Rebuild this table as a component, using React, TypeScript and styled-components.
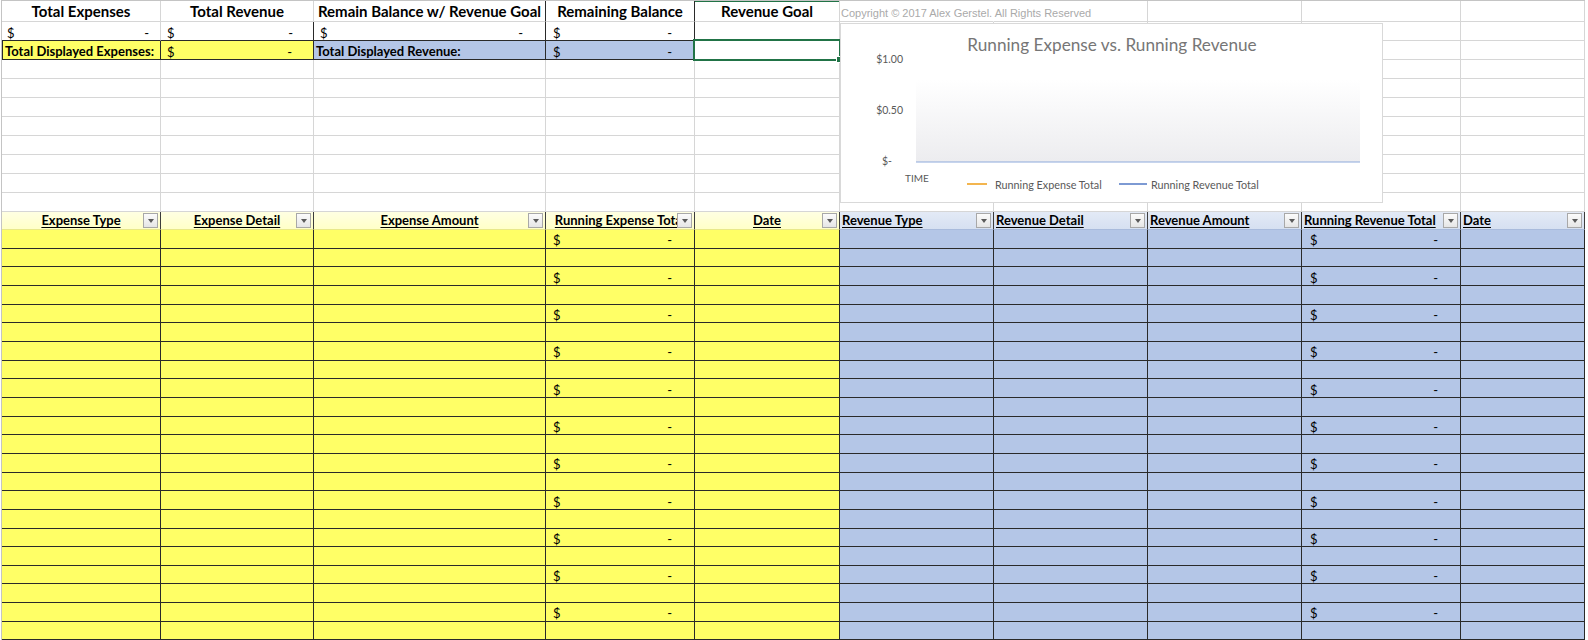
import React from 'react';
import styled, { createGlobalStyle } from 'styled-components';

const YELLOW = '#FFFF66';
const BLUE = '#B4C6E7';
const GRID = '#d6d6d6';
const DARK = '#2a2a2a';
const GREEN = '#217346';

const COLS = [159, 153, 232, 149, 145, 154, 154, 154, 159, 124];

const GlobalStyle = createGlobalStyle`
  html, body { margin: 0; padding: 0; background: #fff; }
  body { font-family: Lato, "Liberation Sans", sans-serif; color: #000; }
`;

const Page = styled.div`
  position: relative;
  width: 1588px;
  height: 640px;
  overflow: hidden;
  box-sizing: border-box;
  padding-left: 1px;
  background: #fff;
`;

const Sheet = styled.div`
  display: grid;
  grid-template-columns: ${COLS.map((c) => `${c}px`).join(' ')};
  grid-template-rows: 21px repeat(10, 19px) 18px repeat(22, 18.67px);
  width: max-content;
  border-left: 1px solid #c4c4c4;
  border-top: 1px solid #c4c4c4;
`;

type CellProps = {
  $bg?: string;
  $r?: string;
  $b?: string;
  $l?: string;
  $t?: string;
  $justify?: string;
  $padL?: number;
  $padR?: number;
  $padT?: number;
};

const Cell = styled.div<CellProps>`
  box-sizing: border-box;
  position: relative;
  min-width: 0;
  display: flex;
  align-items: center;
  justify-content: ${(p) => p.$justify || 'flex-start'};
  padding: ${(p) => p.$padT ?? 0}px ${(p) => p.$padR ?? 2}px 0 ${(p) => p.$padL ?? 2}px;
  background: ${(p) => p.$bg || 'transparent'};
  border-right: 1px solid ${(p) => p.$r || GRID};
  border-bottom: 1px solid ${(p) => p.$b || GRID};
  box-shadow: ${(p) =>
    [p.$l ? `inset 1px 0 0 ${p.$l}` : '', p.$t ? `inset 0 1px 0 ${p.$t}` : '']
      .filter(Boolean)
      .join(', ') || 'none'};
  white-space: nowrap;
  font-size: 13px;
  line-height: 1;
`;

const ColTitle = styled.span`
  font-weight: 700;
  font-size: 15px;
`;

const BoldLabel = styled.span`
  font-weight: 700;
  font-size: 13px;
`;

const Dollar = styled.span`
  font-size: 13px;
`;

const Dash = styled.span`
  font-size: 13px;
`;

const Copyright = styled.span`
  font-family: "Liberation Sans", Arial, sans-serif;
  font-size: 11px;
  color: #aaaaaa;
  position: relative;
  z-index: 1;
`;

const Selection = styled.span`
  position: absolute;
  left: -2px;
  top: -2px;
  right: -2px;
  bottom: -2px;
  border: 2px solid ${GREEN};
  pointer-events: none;
  z-index: 2;
  &::after {
    content: '';
    position: absolute;
    right: -4px;
    bottom: -4px;
    width: 5px;
    height: 5px;
    background: ${GREEN};
    border: 1px solid #fff;
  }
`;

const HeaderCell = styled(Cell)<{ $side: 'exp' | 'rev' }>`
  background: ${(p) =>
    p.$side === 'exp'
      ? 'linear-gradient(#ffffe2, #ffffc8)'
      : 'linear-gradient(#e3eaf6, #d6e0f1)'};
  border-right-color: #3c3c3c;
  border-bottom-color: ${(p) => (p.$side === 'exp' ? '#e8e88a' : '#a9bbdc')};
  overflow: hidden;
`;

const HeaderLabel = styled.span`
  font-weight: 700;
  font-size: 13px;
  text-decoration: underline;
  text-underline-offset: 2px;
  text-decoration-thickness: 1px;
`;

const FilterButton = styled.span`
  position: absolute;
  right: 2px;
  top: 1px;
  width: 15px;
  height: 15px;
  box-sizing: border-box;
  border: 1px solid #a8a8a8;
  background: linear-gradient(#fbfbfb, #e6e6e6);
  display: flex;
  align-items: center;
  justify-content: center;
  &::after {
    content: '';
    border-left: 3.5px solid transparent;
    border-right: 3.5px solid transparent;
    border-top: 4px solid #5a5a5a;
    margin-top: 1px;
  }
`;

const ChartBox = styled.div`
  position: absolute;
  left: 840px;
  top: 23px;
  width: 543px;
  height: 180px;
  box-sizing: border-box;
  background: #fff;
  border: 1px solid #d9d9d9;
  z-index: 3;
`;

const ChartSvg = styled.svg`
  display: block;
  font-family: Lato, "Liberation Sans", sans-serif;
`;

type MoneyProps = { padL: number; padR: number; bg?: string; r?: string; b?: string };

function MoneyCell({ padL, padR, bg, r, b }: MoneyProps) {
  return (
    <Cell $bg={bg} $r={r} $b={b} $justify="space-between" $padL={padL} $padR={padR} $padT={4}>
      <Dollar>$</Dollar>
      <Dash>-</Dash>
    </Cell>
  );
}

const HEADERS: { label: string; side: 'exp' | 'rev' }[] = [
  { label: 'Expense Type', side: 'exp' },
  { label: 'Expense Detail', side: 'exp' },
  { label: 'Expense Amount', side: 'exp' },
  { label: 'Running Expense Total', side: 'exp' },
  { label: 'Date', side: 'exp' },
  { label: 'Revenue Type', side: 'rev' },
  { label: 'Revenue Detail', side: 'rev' },
  { label: 'Revenue Amount', side: 'rev' },
  { label: 'Running Revenue Total', side: 'rev' },
  { label: 'Date', side: 'rev' },
];

function EmptyRow({ row }: { row: number }) {
  return (
    <>
      {COLS.map((_, i) => (
        <Cell key={`e-${row}-${i}`} />
      ))}
    </>
  );
}

function DataRow({ index }: { index: number }) {
  const showMoney = index % 2 === 0;
  return (
    <>
      {COLS.map((_, i) => {
        const bg = i < 5 ? YELLOW : BLUE;
        if (showMoney && (i === 3 || i === 8)) {
          return <MoneyCell key={`d-${index}-${i}`} bg={bg} r={DARK} b={DARK} padL={i === 3 ? 7 : 8} padR={22} />;
        }
        return <Cell key={`d-${index}-${i}`} $bg={bg} $r={DARK} $b={DARK} />;
      })}
    </>
  );
}

function Chart() {
  return (
    <ChartBox>
      <ChartSvg width={541} height={178} viewBox="0 0 541 178">
        <defs>
          <linearGradient id="plotGrad" x1="0" y1="0" x2="0" y2="1">
            <stop offset="0" stopColor="#ffffff" />
            <stop offset="1" stopColor="#ececef" />
          </linearGradient>
        </defs>
        <text x={271} y={20.5} textAnchor="middle" dominantBaseline="central" fontSize={17.2} fill="#767676">
          Running Expense vs. Running Revenue
        </text>
        <text x={62} y={35} textAnchor="end" dominantBaseline="central" fontSize={10.5} fill="#595959">$1.00</text>
        <text x={62} y={85.5} textAnchor="end" dominantBaseline="central" fontSize={10.5} fill="#595959">$0.50</text>
        <text x={51} y={137} textAnchor="end" dominantBaseline="central" fontSize={10.5} fill="#595959">$-</text>
        <rect x={75} y={56} width={444} height={82} fill="url(#plotGrad)" />
        <line x1={75} y1={138} x2={519} y2={138} stroke="#8eaadb" strokeWidth={1} />
        <text x={64} y={154} dominantBaseline="central" fontSize={10} fill="#595959">TIME</text>
        <line x1={126} y1={160} x2={146} y2={160} stroke="#f2ad3c" strokeWidth={1.8} />
        <text x={154} y={160} dominantBaseline="central" fontSize={10.8} fill="#595959">Running Expense Total</text>
        <line x1={278} y1={160} x2={306} y2={160} stroke="#6f8fcf" strokeWidth={1.8} />
        <text x={310} y={160} dominantBaseline="central" fontSize={10.8} fill="#595959">Running Revenue Total</text>
      </ChartSvg>
    </ChartBox>
  );
}

export default function App() {
  return (
    <>
      <GlobalStyle />
      <Page>
        <Sheet>
          {/* Row 1 */}
          <Cell $justify="center"><ColTitle>Total Expenses</ColTitle></Cell>
          <Cell $justify="center"><ColTitle>Total Revenue</ColTitle></Cell>
          <Cell $justify="center" $r={DARK}><ColTitle>Remain Balance w/ Revenue Goal</ColTitle></Cell>
          <Cell $justify="center" $r={DARK}><ColTitle>Remaining Balance</ColTitle></Cell>
          <Cell $justify="center" $t={GREEN}><ColTitle>Revenue Goal</ColTitle></Cell>
          <Cell $r="transparent" $padL={1} $padT={4}><Copyright>Copyright © 2017 Alex Gerstel. All Rights Reserved</Copyright></Cell>
          <Cell />
          <Cell />
          <Cell />
          <Cell />

          {/* Row 2 */}
          <MoneyCell padL={5} padR={11} b={DARK} />
          <MoneyCell padL={6} padR={20} b={DARK} r={DARK} />
          <MoneyCell padL={6} padR={22} b={DARK} r={DARK} />
          <MoneyCell padL={7} padR={22} b={DARK} r={DARK} />
          <Cell />
          <Cell />
          <Cell />
          <Cell />
          <Cell />
          <Cell />

          {/* Row 3 */}
          <Cell $bg={YELLOW} $r={DARK} $b={DARK} $l={DARK} $padL={3} $padT={2}><BoldLabel>Total Displayed Expenses:</BoldLabel></Cell>
          <MoneyCell bg={YELLOW} padL={6} padR={21} r={DARK} b={DARK} />
          <Cell $bg={BLUE} $r={DARK} $b={DARK} $padL={2} $padT={2}><BoldLabel>Total Displayed Revenue:</BoldLabel></Cell>
          <MoneyCell bg={BLUE} padL={7} padR={22} r={DARK} b={DARK} />
          <Cell><Selection /></Cell>
          <Cell />
          <Cell />
          <Cell />
          <Cell />
          <Cell />

          {/* Rows 4 - 11 */}
          {[4, 5, 6, 7, 8, 9, 10, 11].map((r) => (
            <EmptyRow key={r} row={r} />
          ))}

          {/* Table header */}
          {HEADERS.map((h, i) => (
            <HeaderCell
              key={`h-${i}`}
              $side={h.side}
              $justify={h.side === 'exp' ? 'center' : 'flex-start'}
              $padL={h.side === 'exp' ? 0 : 2}
              $padR={0}
            >
              <HeaderLabel>{h.label}</HeaderLabel>
              <FilterButton />
            </HeaderCell>
          ))}

          {/* Data rows */}
          {Array.from({ length: 22 }, (_, i) => (
            <DataRow key={i} index={i} />
          ))}
        </Sheet>
        <Chart />
      </Page>
    </>
  );
}
